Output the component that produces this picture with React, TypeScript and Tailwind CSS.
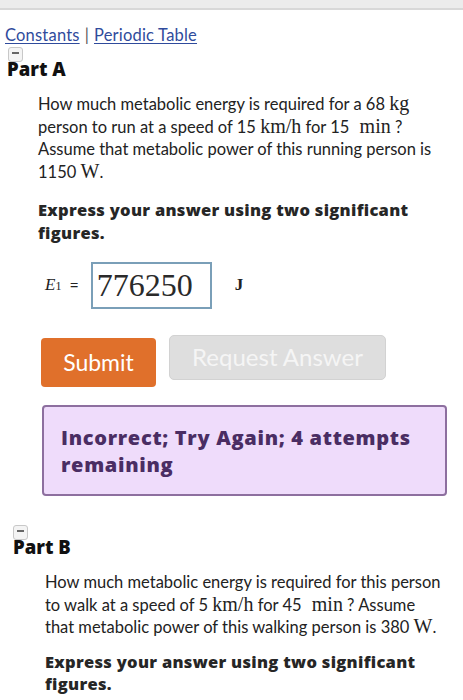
import React from "react";

const sans = "font-['Lato','Open_Sans',sans-serif]";
const heavy = "font-['Open_Sans','Lato',sans-serif] font-extrabold";
const serif = "font-['Liberation_Serif','DejaVu_Serif',serif]";
const unit = `${serif} text-[20px] leading-none`;

function CollapseIcon() {
  return (
    <div className="w-[15px] h-[15px] rounded-[3px] border border-[#c8c8c8] bg-[#f4f4f4] flex justify-center">
      <div className="mt-[4px] w-[7px] h-[2px] bg-[#666]" />
    </div>
  );
}

export default function App() {
  return (
    <div className={`w-[463px] h-[700px] bg-white overflow-hidden text-[#222] ${sans}`}>
      <div className="h-[10px] bg-[#ececec] border-b-2 border-[#d8d8d8]" />
      <div className="pl-[5px] pt-[15px] text-[16.5px] leading-[21px] tracking-[0.2px]">
        <span className="text-[#2f4b9c] underline underline-offset-2">Constants</span>
        <span className="text-[#555] mx-[5px]">|</span>
        <span className="text-[#2f4b9c] underline underline-offset-2">Periodic Table</span>
      </div>
      <div className="pl-[8px] pt-[1px]">
        <CollapseIcon />
      </div>
      <div className={`pl-[7px] -mt-[4px] text-[18.5px] leading-[22px] text-[#111] ${heavy}`}>Part A</div>

      <div className="pl-[38px] pr-[22px] pt-[13px] text-[16.5px] leading-[22.5px] text-[#222]">
        <p>
          How much metabolic energy is required for a 68 <span className={unit}>kg</span> person to run at a speed of 15 <span className={unit}>km/h</span> for 15 <span className={`${unit} ml-[6px]`}>min</span> ? Assume that metabolic power of this running person is 1150 <span className={unit}>W</span>.
        </p>
        <p className={`mt-[16px] text-[16.5px] tracking-[0.3px] leading-[22.5px] text-[#262626] ${heavy}`}>Express your answer using two significant figures.</p>

        <div className="mt-[18px] flex items-center h-[47px]">
          <span className={`ml-[7px] ${serif} italic text-[17px]`}>E<span className="not-italic text-[12px]">1</span></span>
          <span className="ml-[8px] text-[16px]">=</span>
          <div className={`ml-[12px] w-[121px] h-[47px] border-2 border-[#7a9fb8] flex items-center pl-[4px] ${serif} text-[32px] text-[#2a2a2a]`}>776250</div>
          <span className={`ml-[23px] ${serif} text-[17px] font-bold`}>J</span>
        </div>

        <div className="mt-[26px] flex items-start gap-[13px]">
          <div className="ml-[3px] w-[115px] h-[49px] bg-[#e0702b] rounded-[4px] text-white text-[23px] flex items-center justify-center mt-[3px]">Submit</div>
          <div className="w-[217px] h-[45px] bg-[#dedede] rounded-[5px] text-[#f5f5f5] text-[24px] flex items-center justify-center border border-[#d2d2d2]">Request Answer</div>
        </div>

        <div className={`mt-[18px] ml-[4px] w-[405px] h-[91px] bg-[#efdcfb] border-2 border-[#8d6f9f] rounded-[4px] px-[17px] pt-[17px] text-[20px] tracking-[0.7px] leading-[27px] text-[#4a2d63] ${heavy}`}>
          Incorrect; Try Again; 4 attempts remaining
        </div>
      </div>

      <div className="pl-[13px] pt-[29px]">
        <CollapseIcon />
      </div>
      <div className={`pl-[13px] -mt-[4px] text-[18.5px] leading-[22px] text-[#111] ${heavy}`}>Part B</div>
      <div className="pl-[45px] pr-[22px] pt-[13px] text-[16.5px] leading-[22.5px] text-[#222]">
        <p>
          How much metabolic energy is required for this person to walk at a speed of 5 <span className={unit}>km/h</span> for 45 <span className={`${unit} ml-[6px]`}>min</span> ? Assume that metabolic power of this walking person is 380 <span className={unit}>W</span>.
        </p>
        <p className={`mt-[12px] text-[16.5px] tracking-[0.3px] leading-[22.5px] text-[#262626] ${heavy}`}>Express your answer using two significant figures.</p>
      </div>
    </div>
  );
}
